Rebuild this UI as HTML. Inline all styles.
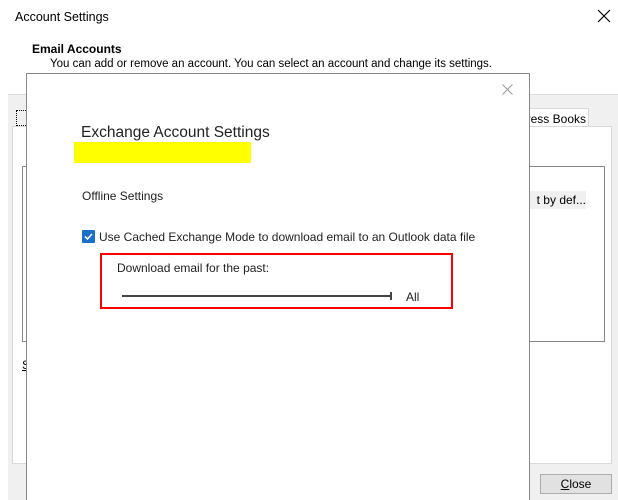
<!DOCTYPE html>
<html style="overflow:hidden;width:618px;height:500px"><head><style>
body{margin:0;width:618px;height:500px;position:relative;overflow:hidden;background:#fff;font-family:"Liberation Sans",sans-serif;color:#000}
.a{position:absolute}
.t{font-size:12px;white-space:nowrap}
</style></head><body>
<div class="a t" style="left:15px;top:10px;font-size:12.5px">Account Settings</div>
<svg class="a" style="left:597px;top:9px" width="14" height="14"><path d="M1 1L13 13M13 1L1 13" stroke="#000" stroke-width="1.2"/></svg>
<div class="a t" style="left:32px;top:42px;font-weight:bold">Email Accounts</div>
<div class="a t" style="left:50px;top:58px;font-size:11.5px">You can add or remove an account. You can select an account and change its settings.</div>
<div class="a" style="left:8px;top:94px;width:610px;height:406px;background:#f0f0f0;border-top:1px solid #ddd"></div>
<div class="a" style="left:12px;top:126px;width:598px;height:336px;background:#fff;border:1px solid #d9d9d9"></div>
<div class="a t" style="left:520px;top:108px;width:69px;height:18px;background:#fff;border:1px solid #d9d9d9;border-bottom:none;text-align:right;line-height:20px;padding-right:2px;box-sizing:border-box">ress Books</div>
<div class="a" style="left:16px;top:110px;width:12px;height:14px;border:1px dotted #000"></div>
<div class="a" style="left:22px;top:166px;width:581px;height:174px;background:#fff;border:1px solid #828790"></div>
<div class="a t" style="left:500px;top:191px;width:86px;height:18px;background:#f0f0f0;line-height:19px;text-align:right">t by def...</div>
<div class="a t" style="left:22px;top:358px"><u>S</u></div>
<div class="a t" style="left:540px;top:474px;width:72px;height:20px;background:#e1e1e1;border:1px solid #adadad;box-sizing:border-box;text-align:center;line-height:19px"><u>C</u>lose</div>
<div class="a" style="left:26px;top:73px;width:504px;height:427px;background:#fff;border:1px solid #8a8a8a;border-bottom:none;box-sizing:border-box"></div>
<svg class="a" style="left:502px;top:84px" width="11" height="11"><path d="M0.5 0.5L10.5 10.5M10.5 0.5L0.5 10.5" stroke="#999" stroke-width="1"/></svg>
<div class="a" style="left:81px;top:124px;font-size:15.5px;white-space:nowrap;color:#222">Exchange Account Settings</div>
<div class="a" style="left:74px;top:142px;width:177px;height:21px;background:#ffff00"></div>
<div class="a t" style="left:82px;top:189px;color:#222">Offline Settings</div>
<div class="a" style="left:82px;top:230px;width:13px;height:13px;background:#1a6fc9;border-radius:1px"><svg width="13" height="13"><path d="M3 6.5l2.5 2.5 4.5-5" stroke="#fff" stroke-width="1.6" fill="none"/></svg></div>
<div class="a t" style="left:99px;top:230px;color:#222">Use Cached Exchange Mode to download email to an Outlook data file</div>
<div class="a" style="left:100px;top:253px;width:353px;height:56px;border:2px solid #f00;box-sizing:border-box"></div>
<div class="a t" style="left:117px;top:261px;color:#222">Download email for the past:</div>
<div class="a" style="left:122px;top:295px;width:269px;height:2px;background:#444"></div>
<div class="a" style="left:390px;top:292px;width:2px;height:8px;background:#444"></div>
<div class="a t" style="left:406px;top:290px;color:#222">All</div>
</body></html>
